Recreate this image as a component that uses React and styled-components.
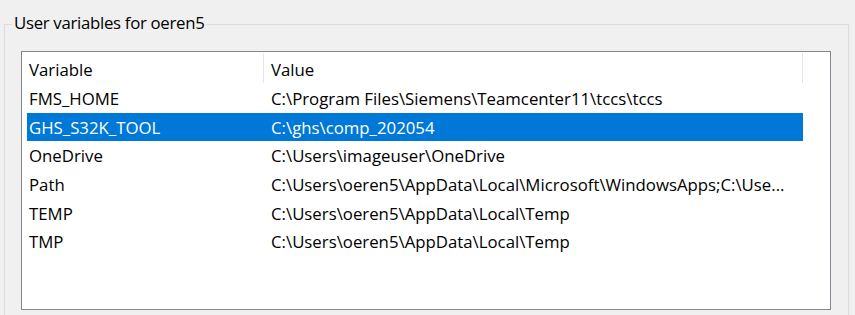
import styled, { createGlobalStyle } from 'styled-components'

const GlobalStyle = createGlobalStyle`
  html, body {
    margin: 0;
    padding: 0;
    background: #f0f0f0;
    overflow: hidden;
  }
  body {
    font-family: 'Open Sans', 'Noto Sans', sans-serif;
    font-size: 16.8px;
    color: #000;
  }
`

const Page = styled.div`
  width: 855px;
  height: 315px;
  padding-top: 24px;
  box-sizing: border-box;
  overflow: hidden;
`

const Group = styled.div`
  position: relative;
  margin: 0 6px 0 4px;
  height: 300px;
  border: 1px solid #dcdcdc;
  border-bottom: none;
  padding: 26px 17px 0 16px;
  box-sizing: border-box;
`

const GroupLabel = styled.span`
  position: absolute;
  top: -14px;
  left: 7px;
  padding: 0 2px;
  background: #f0f0f0;
  line-height: 24px;
  letter-spacing: -0.3px;
`

const ListView = styled.div`
  width: 810px;
  height: 259px;
  box-sizing: border-box;
  border: 1px solid #828790;
  background: #fff;
  overflow: hidden;
`

const Header = styled.div`
  display: flex;
  height: 32px;
  align-items: stretch;
`

const HeaderCell = styled.div`
  width: ${(p) => p.$width}px;
  box-sizing: border-box;
  padding: 3px 0 0 7px;
  display: flex;
  align-items: center;
  border-right: 1px solid #e5e5e5;
  margin-top: 1px;
  margin-bottom: 1px;
`

const Rows = styled.div`
  display: flex;
  flex-direction: column;
  margin-left: 5px;
  width: 776px;
`

const Row = styled.div`
  display: flex;
  height: 28.7px;
  align-items: center;
  background: ${(p) => (p.$selected ? '#0078d7' : 'transparent')};
  color: ${(p) => (p.$selected ? '#fff' : '#000')};
`

const Cell = styled.div`
  width: ${(p) => p.$width}px;
  box-sizing: border-box;
  padding-left: ${(p) => p.$pad}px;
  white-space: nowrap;
  overflow: hidden;
  text-overflow: ellipsis;
`

const variables = [
  { name: 'FMS_HOME', value: 'C:\\Program Files\\Siemens\\Teamcenter11\\tccs\\tccs' },
  { name: 'GHS_S32K_TOOL', value: 'C:\\ghs\\comp_202054', selected: true },
  { name: 'OneDrive', value: 'C:\\Users\\imageuser\\OneDrive' },
  {
    name: 'Path',
    value: 'C:\\Users\\oeren5\\AppData\\Local\\Microsoft\\WindowsApps;C:\\Use...',
  },
  { name: 'TEMP', value: 'C:\\Users\\oeren5\\AppData\\Local\\Temp' },
  { name: 'TMP', value: 'C:\\Users\\oeren5\\AppData\\Local\\Temp' },
]

export default function App() {
  return (
    <Page>
      <GlobalStyle />
      <Group>
        <GroupLabel>User variables for oeren5</GroupLabel>
        <ListView>
          <Header>
            <HeaderCell $width={242}>Variable</HeaderCell>
            <HeaderCell $width={539}>Value</HeaderCell>
          </Header>
          <Rows>
            {variables.map((v) => (
              <Row key={v.name} $selected={v.selected}>
                <Cell $width={237} $pad={2}>
                  {v.name}
                </Cell>
                <Cell $width={539} $pad={7}>
                  {v.value}
                </Cell>
              </Row>
            ))}
          </Rows>
        </ListView>
      </Group>
    </Page>
  )
}
